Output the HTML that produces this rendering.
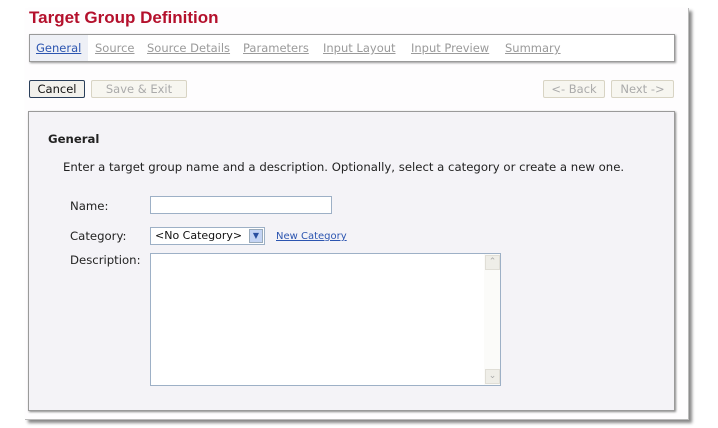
<!DOCTYPE html>
<html><head><style>
*{margin:0;padding:0;box-sizing:border-box}
body{width:718px;height:428px;background:#fff;position:relative;font-family:"DejaVu Sans",Verdana,sans-serif;font-size:11.7px;overflow:hidden}
.abs{position:absolute}
.outer{left:25px;top:8px;width:664px;height:412px;background:#fefdfe;box-shadow:3px 3px 3px #888;border-right:1px solid #bbb;border-bottom:1px solid #bbb}
.title{left:29px;top:8px;font-family:"Liberation Sans",Arial,sans-serif;font-weight:bold;font-size:17px;color:#b4102c}
.nav{left:29px;top:34px;width:646px;height:28px;border:1px solid #9a9a9a;box-shadow:1px 1px 2px #999;background:#fff}
.nav span{position:absolute;top:6px;color:#9a9a9a;text-decoration:underline;font-size:11.5px}
.btn{top:80px;height:18px;border:1px solid #d8d4c4;border-radius:2px;background:#f7f6f0;color:#aaa;font-size:11.5px;text-align:center;line-height:16px}
.panel{left:28px;top:111px;width:647px;height:300px;background:#f4f3f7;border:1px solid #9a9a9a;box-shadow:1px 1px 2px #888}
.lbl{color:#222}
.inp{background:#fff;border:1px solid #9db0c6}
</style></head><body>
<div class="abs outer"></div>
<div class="abs title">Target Group Definition</div>
<div class="abs nav">
<div class="abs" style="left:0;top:0;width:58px;height:26px;background:#eef0f6"></div>
<span style="left:6px;color:#2c55b0">General</span>
<span style="left:65px">Source</span>
<span style="left:117px">Source Details</span>
<span style="left:213px">Parameters</span>
<span style="left:293px">Input Layout</span>
<span style="left:381px">Input Preview</span>
<span style="left:475px">Summary</span>
</div>
<div class="abs btn" style="left:29px;width:56px;border-color:#2a3f5a;color:#111;background:#f2f1ec">Cancel</div>
<div class="abs btn" style="left:91px;width:96px">Save &amp; Exit</div>
<div class="abs btn" style="left:543px;width:62px">&lt;- Back</div>
<div class="abs btn" style="left:611px;width:63px">Next -&gt;</div>
<div class="abs panel"></div>
<div class="abs lbl" style="left:48px;top:132px;font-weight:bold">General</div>
<div class="abs lbl" style="left:63px;top:160px">Enter a target group name and a description. Optionally, select a category or create a new one.</div>
<div class="abs lbl" style="left:70px;top:199px">Name:</div>
<div class="abs inp" style="left:150px;top:196px;width:182px;height:18px"></div>
<div class="abs lbl" style="left:70px;top:229px">Category:</div>
<div class="abs inp" style="left:150px;top:227px;width:115px;height:18px;color:#111;padding:1px 0 0 4px;font-size:11px">&lt;No Category&gt;</div>
<div class="abs" style="left:249px;top:229px;width:14px;height:14px;background:#c4d4f4;border:1px solid #9ab;color:#2a4fa0;font-size:8px;text-align:center;line-height:12px">&#9660;</div>
<div class="abs" style="left:276px;top:231px;color:#2c55b0;text-decoration:underline;font-size:10px">New Category</div>
<div class="abs lbl" style="left:70px;top:253px">Description:</div>
<div class="abs inp" style="left:150px;top:253px;width:351px;height:133px"></div>
<div class="abs" style="left:484px;top:254px;width:16px;height:131px;background:#fbfbf9"></div>
<div class="abs" style="left:485px;top:255px;width:15px;height:15px;background:#efeee8;border:1px solid #e0ded6;color:#aaa;font-size:9px;text-align:center;line-height:13px">&#8963;</div>
<div class="abs" style="left:485px;top:369px;width:15px;height:15px;background:#efeee8;border:1px solid #e0ded6;color:#aaa;font-size:9px;text-align:center;line-height:13px">&#8964;</div>
</body></html>
